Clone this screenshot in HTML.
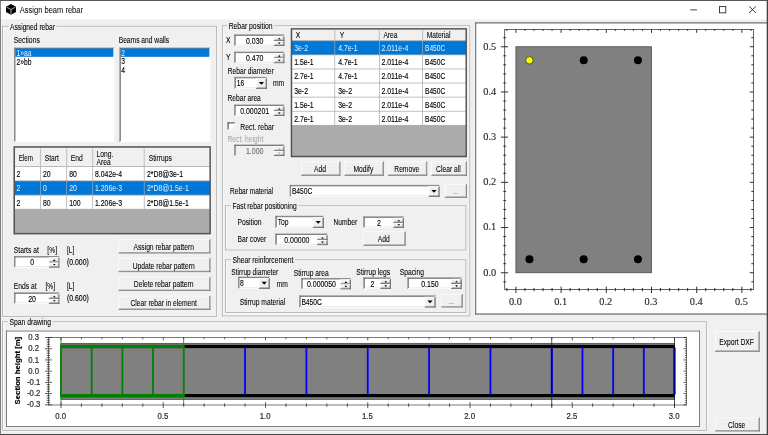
<!DOCTYPE html>
<html><head><meta charset="utf-8"><title>Assign beam rebar</title>
<style>html,body{margin:0;padding:0;background:#f0f0f0;overflow:hidden}body{width:768px;height:435px;font-family:"Liberation Sans",sans-serif}svg text{font-family:"Liberation Sans",sans-serif;white-space:pre}</style></head>
<body>
<svg width="768" height="435" viewBox="0 0 768 435" font-family="Liberation Sans, sans-serif" style="display:block">
<defs><filter id="b" x="-2%" y="-2%" width="104%" height="104%" color-interpolation-filters="sRGB"><feGaussianBlur stdDeviation="0.4"/></filter></defs>
<rect x="-5" y="-5" width="778" height="445" fill="#f0f0f0"/>
<g filter="url(#b)">
<rect x="-5" y="-5" width="778" height="445" fill="#f0f0f0"/>
<rect x="-5" y="-5" width="778" height="24.3" fill="#ffffff"/>
<g id="titlebar">
<path d="M11 4.1L16 6.8V12L11 14.7L6 12V6.8Z" fill="#000"/>
<path d="M11 9.5V14.2M11 9.5L6.6 7.2M11 9.5L15.4 7.2" stroke="#c4c4c4" stroke-width="0.85" fill="none"/>
<text x="19.8" y="13" font-size="8.9" fill="#111" textLength="63.2" lengthAdjust="spacingAndGlyphs" stroke="#111" stroke-width="0.06">Assign beam rebar</text>
<rect x="690.2" y="9.45" width="6.8" height="0.85" fill="#2c2c2c"/>
<rect x="719.5" y="6.6" width="6.3" height="6.2" fill="none" stroke="#2c2c2c" stroke-width="0.9"/>
<path d="M749.2 6.3L755.9 13M755.9 6.3L749.2 13" stroke="#222" stroke-width="0.9" fill="none"/>
</g>
<g id="assigned">
<rect x="3.28" y="26.88" width="214.1" height="290.2" fill="none" stroke="#ffffff" stroke-width="0.68"/>
<rect x="2.6" y="26.2" width="214.1" height="290.2" fill="none" stroke="#a0a0a0" stroke-width="0.68"/>
<rect x="8.5" y="22.2" width="48" height="8" fill="#f0f0f0"/>
<text x="10" y="29.68" font-size="8.32" fill="#000" textLength="45" lengthAdjust="spacingAndGlyphs" stroke="#000" stroke-width="0.07">Assigned rebar</text>
<text x="13.8" y="43.18" font-size="8.32" fill="#000" textLength="26" lengthAdjust="spacingAndGlyphs" stroke="#000" stroke-width="0.07">Sections</text>
<text x="118.7" y="43.18" font-size="8.32" fill="#000" textLength="50.5" lengthAdjust="spacingAndGlyphs" stroke="#000" stroke-width="0.07">Beams and walls</text>
<rect x="14" y="47.6" width="100.2" height="94.4" fill="#ffffff"/>
<rect x="14" y="47.6" width="100.2" height="0.68" fill="#808080"/>
<rect x="14" y="47.6" width="0.68" height="94.4" fill="#808080"/>
<rect x="14.68" y="48.28" width="98.84" height="0.68" fill="#585858"/>
<rect x="14.68" y="48.28" width="0.68" height="93.04" fill="#585858"/>
<rect x="14.68" y="141.32" width="99.52" height="0.68" fill="#ffffff"/>
<rect x="113.52" y="48.28" width="0.68" height="93.72" fill="#ffffff"/>
<rect x="15.36" y="140.64" width="98.16" height="0.68" fill="#ffffff"/>
<rect x="112.84" y="48.96" width="0.68" height="92.36" fill="#ffffff"/>
<rect x="15.3" y="48.5" width="98.1" height="8.3" fill="#0078d7"/>
<text x="16.6" y="56.18" font-size="9.52" fill="#fff" textLength="14.95" lengthAdjust="spacingAndGlyphs" fill-opacity="0.9">1»aa</text>
<text x="16.6" y="64.88" font-size="9.52" fill="#000" textLength="14.95" lengthAdjust="spacingAndGlyphs" stroke="#000" stroke-width="0.14">2»bb</text>
<rect x="119.4" y="47.6" width="90.8" height="94.4" fill="#ffffff"/>
<rect x="119.4" y="47.6" width="90.8" height="0.68" fill="#808080"/>
<rect x="119.4" y="47.6" width="0.68" height="94.4" fill="#808080"/>
<rect x="120.08" y="48.28" width="89.44" height="0.68" fill="#585858"/>
<rect x="120.08" y="48.28" width="0.68" height="93.04" fill="#585858"/>
<rect x="120.08" y="141.32" width="90.12" height="0.68" fill="#ffffff"/>
<rect x="209.52" y="48.28" width="0.68" height="93.72" fill="#ffffff"/>
<rect x="120.76" y="140.64" width="88.76" height="0.68" fill="#ffffff"/>
<rect x="208.84" y="48.96" width="0.68" height="92.36" fill="#ffffff"/>
<rect x="120.7" y="48.5" width="88.7" height="8.3" fill="#0078d7"/>
<text x="121.3" y="56.18" font-size="9.52" fill="#fff" textLength="3.74" lengthAdjust="spacingAndGlyphs" fill-opacity="0.9">2</text>
<text x="121.3" y="64.38" font-size="9.52" fill="#000" textLength="3.74" lengthAdjust="spacingAndGlyphs" stroke="#000" stroke-width="0.14">3</text>
<text x="121.3" y="72.88" font-size="9.52" fill="#000" textLength="3.74" lengthAdjust="spacingAndGlyphs" stroke="#000" stroke-width="0.14">4</text>
<rect x="13.6" y="146.3" width="197.2" height="88" fill="#ababab"/>
<rect x="14.4" y="147.1" width="195.6" height="19.5" fill="#f0f0f0"/>
<rect x="14.4" y="166.6" width="195.6" height="42.6" fill="#ffffff"/>
<rect x="14.4" y="180.9" width="195.6" height="14.2" fill="#0078d7"/>
<rect x="39.9" y="148.5" width="1" height="17.5" fill="#bdbdbd"/>
<rect x="40.05" y="166.6" width="0.7" height="42.6" fill="#a6a6a6"/>
<rect x="66.2" y="148.5" width="1" height="17.5" fill="#bdbdbd"/>
<rect x="66.35" y="166.6" width="0.7" height="42.6" fill="#a6a6a6"/>
<rect x="92.2" y="148.5" width="1" height="17.5" fill="#bdbdbd"/>
<rect x="92.35" y="166.6" width="0.7" height="42.6" fill="#a6a6a6"/>
<rect x="143.7" y="148.5" width="1" height="17.5" fill="#bdbdbd"/>
<rect x="143.85" y="166.6" width="0.7" height="42.6" fill="#a6a6a6"/>
<rect x="14.4" y="166.25" width="195.6" height="0.7" fill="#a6a6a6"/>
<rect x="14.4" y="180.55" width="195.6" height="0.7" fill="#a6a6a6"/>
<rect x="14.4" y="194.75" width="195.6" height="0.7" fill="#a6a6a6"/>
<rect x="14.4" y="208.85" width="195.6" height="0.7" fill="#a6a6a6"/>
<rect x="14.3" y="147" width="195.8" height="86.6" fill="none" stroke="#525252" stroke-width="1.4"/>
<text x="18.7" y="161.18" font-size="8.32" fill="#000" textLength="14.2" lengthAdjust="spacingAndGlyphs" stroke="#000" stroke-width="0.07">Elem</text>
<text x="44.7" y="161.18" font-size="8.32" fill="#000" textLength="14.19" lengthAdjust="spacingAndGlyphs" stroke="#000" stroke-width="0.07">Start</text>
<text x="70.8" y="161.18" font-size="8.32" fill="#000" textLength="11.96" lengthAdjust="spacingAndGlyphs" stroke="#000" stroke-width="0.07">End</text>
<text x="96.6" y="156.98" font-size="8.32" fill="#000" textLength="16.81" lengthAdjust="spacingAndGlyphs" stroke="#000" stroke-width="0.07">Long.</text>
<text x="96.6" y="164.98" font-size="8.32" fill="#000" textLength="14.19" lengthAdjust="spacingAndGlyphs" stroke="#000" stroke-width="0.07">Area</text>
<text x="148.7" y="161.08" font-size="8.32" fill="#000" textLength="23.15" lengthAdjust="spacingAndGlyphs" stroke="#000" stroke-width="0.07">Stirrups</text>
<text x="16.6" y="177.23" font-size="9.52" fill="#000" textLength="3.83" lengthAdjust="spacingAndGlyphs" stroke="#000" stroke-width="0.14">2</text>
<text x="43" y="177.23" font-size="9.52" fill="#000" textLength="7.65" lengthAdjust="spacingAndGlyphs" stroke="#000" stroke-width="0.14">20</text>
<text x="69.2" y="177.23" font-size="9.52" fill="#000" textLength="7.65" lengthAdjust="spacingAndGlyphs" stroke="#000" stroke-width="0.14">80</text>
<text x="95" y="177.23" font-size="9.52" fill="#000" textLength="27.16" lengthAdjust="spacingAndGlyphs" stroke="#000" stroke-width="0.14">8.042e-4</text>
<text x="147" y="177.23" font-size="9.52" fill="#000" textLength="36.05" lengthAdjust="spacingAndGlyphs" stroke="#000" stroke-width="0.14">2*D8@3e-1</text>
<text x="16.6" y="191.48" font-size="9.52" fill="#fff" textLength="3.83" lengthAdjust="spacingAndGlyphs" fill-opacity="0.9">2</text>
<text x="43" y="191.48" font-size="9.52" fill="#fff" textLength="3.83" lengthAdjust="spacingAndGlyphs" fill-opacity="0.9">0</text>
<text x="69.2" y="191.48" font-size="9.52" fill="#fff" textLength="7.65" lengthAdjust="spacingAndGlyphs" fill-opacity="0.9">20</text>
<text x="95" y="191.48" font-size="9.52" fill="#fff" textLength="27.16" lengthAdjust="spacingAndGlyphs" fill-opacity="0.9">1.206e-3</text>
<text x="147" y="191.48" font-size="9.52" fill="#fff" textLength="41.79" lengthAdjust="spacingAndGlyphs" fill-opacity="0.9">2*D8@1.5e-1</text>
<text x="16.6" y="205.63" font-size="9.52" fill="#000" textLength="3.83" lengthAdjust="spacingAndGlyphs" stroke="#000" stroke-width="0.14">2</text>
<text x="43" y="205.63" font-size="9.52" fill="#000" textLength="7.65" lengthAdjust="spacingAndGlyphs" stroke="#000" stroke-width="0.14">80</text>
<text x="69.2" y="205.63" font-size="9.52" fill="#000" textLength="11.48" lengthAdjust="spacingAndGlyphs" stroke="#000" stroke-width="0.14">100</text>
<text x="95" y="205.63" font-size="9.52" fill="#000" textLength="27.16" lengthAdjust="spacingAndGlyphs" stroke="#000" stroke-width="0.14">1.206e-3</text>
<text x="147" y="205.63" font-size="9.52" fill="#000" textLength="41.79" lengthAdjust="spacingAndGlyphs" stroke="#000" stroke-width="0.14">2*D8@1.5e-1</text>
<text x="13.8" y="253.18" font-size="8.32" fill="#000" textLength="25.02" lengthAdjust="spacingAndGlyphs" stroke="#000" stroke-width="0.07">Starts at</text>
<text x="47.3" y="253.18" font-size="8.32" fill="#000" textLength="9.71" lengthAdjust="spacingAndGlyphs" stroke="#000" stroke-width="0.07">[%]</text>
<text x="67" y="253.18" font-size="8.32" fill="#000" textLength="7.47" lengthAdjust="spacingAndGlyphs" stroke="#000" stroke-width="0.07">[L]</text>
<rect x="14" y="256" width="45.4" height="11.6" fill="#ffffff"/>
<rect x="14" y="256" width="45.4" height="0.68" fill="#808080"/>
<rect x="14" y="256" width="0.68" height="11.6" fill="#808080"/>
<rect x="14.68" y="256.68" width="44.04" height="0.68" fill="#585858"/>
<rect x="14.68" y="256.68" width="0.68" height="10.24" fill="#585858"/>
<rect x="14.68" y="266.92" width="44.72" height="0.68" fill="#ffffff"/>
<rect x="58.72" y="256.68" width="0.68" height="10.92" fill="#ffffff"/>
<rect x="15.36" y="266.24" width="43.36" height="0.68" fill="#e3e3e3"/>
<rect x="58.04" y="257.36" width="0.68" height="9.56" fill="#e3e3e3"/>
<rect x="48.8" y="257.5" width="10.6" height="5.15" fill="#f0f0f0"/>
<rect x="48.8" y="257.5" width="9.82" height="0.78" fill="#ffffff"/>
<rect x="48.8" y="257.5" width="0.78" height="4.37" fill="#ffffff"/>
<rect x="49.58" y="261.09" width="9.04" height="0.78" fill="#a0a0a0"/>
<rect x="57.84" y="258.28" width="0.78" height="3.59" fill="#a0a0a0"/>
<rect x="48.8" y="261.87" width="10.6" height="0.78" fill="#5e5e5e"/>
<rect x="58.62" y="257.5" width="0.78" height="5.15" fill="#5e5e5e"/>
<rect x="48.8" y="262.65" width="10.6" height="4.95" fill="#f0f0f0"/>
<rect x="48.8" y="262.65" width="9.82" height="0.78" fill="#ffffff"/>
<rect x="48.8" y="262.65" width="0.78" height="4.17" fill="#ffffff"/>
<rect x="49.58" y="266.04" width="9.04" height="0.78" fill="#a0a0a0"/>
<rect x="57.84" y="263.43" width="0.78" height="3.39" fill="#a0a0a0"/>
<rect x="48.8" y="266.82" width="10.6" height="0.78" fill="#5e5e5e"/>
<rect x="58.62" y="262.65" width="0.78" height="4.95" fill="#5e5e5e"/>
<path d="M52.95 260.97H55.65L54.3 259.37Z" fill="#000"/>
<path d="M52.95 264.02H55.65L54.3 265.62Z" fill="#000"/>
<text x="32.08" y="265.28" font-size="9.52" fill="#000" textLength="3.87" lengthAdjust="spacingAndGlyphs" text-anchor="middle" stroke="#000" stroke-width="0.14">0</text>
<text x="67" y="265.18" font-size="9.52" fill="#000" textLength="21.8" lengthAdjust="spacingAndGlyphs" stroke="#000" stroke-width="0.14">(0.000)</text>
<text x="13.8" y="289.18" font-size="8.32" fill="#000" textLength="22.79" lengthAdjust="spacingAndGlyphs" stroke="#000" stroke-width="0.07">Ends at</text>
<text x="45.5" y="289.18" font-size="8.32" fill="#000" textLength="9.71" lengthAdjust="spacingAndGlyphs" stroke="#000" stroke-width="0.07">[%]</text>
<text x="67" y="289.18" font-size="8.32" fill="#000" textLength="7.47" lengthAdjust="spacingAndGlyphs" stroke="#000" stroke-width="0.07">[L]</text>
<rect x="14" y="292.4" width="45.4" height="11.4" fill="#ffffff"/>
<rect x="14" y="292.4" width="45.4" height="0.68" fill="#808080"/>
<rect x="14" y="292.4" width="0.68" height="11.4" fill="#808080"/>
<rect x="14.68" y="293.08" width="44.04" height="0.68" fill="#585858"/>
<rect x="14.68" y="293.08" width="0.68" height="10.04" fill="#585858"/>
<rect x="14.68" y="303.12" width="44.72" height="0.68" fill="#ffffff"/>
<rect x="58.72" y="293.08" width="0.68" height="10.72" fill="#ffffff"/>
<rect x="15.36" y="302.44" width="43.36" height="0.68" fill="#e3e3e3"/>
<rect x="58.04" y="293.76" width="0.68" height="9.36" fill="#e3e3e3"/>
<rect x="48.8" y="293.9" width="10.6" height="5.05" fill="#f0f0f0"/>
<rect x="48.8" y="293.9" width="9.82" height="0.78" fill="#ffffff"/>
<rect x="48.8" y="293.9" width="0.78" height="4.27" fill="#ffffff"/>
<rect x="49.58" y="297.39" width="9.04" height="0.78" fill="#a0a0a0"/>
<rect x="57.84" y="294.68" width="0.78" height="3.49" fill="#a0a0a0"/>
<rect x="48.8" y="298.17" width="10.6" height="0.78" fill="#5e5e5e"/>
<rect x="58.62" y="293.9" width="0.78" height="5.05" fill="#5e5e5e"/>
<rect x="48.8" y="298.95" width="10.6" height="4.85" fill="#f0f0f0"/>
<rect x="48.8" y="298.95" width="9.82" height="0.78" fill="#ffffff"/>
<rect x="48.8" y="298.95" width="0.78" height="4.07" fill="#ffffff"/>
<rect x="49.58" y="302.24" width="9.04" height="0.78" fill="#a0a0a0"/>
<rect x="57.84" y="299.73" width="0.78" height="3.29" fill="#a0a0a0"/>
<rect x="48.8" y="303.02" width="10.6" height="0.78" fill="#5e5e5e"/>
<rect x="58.62" y="298.95" width="0.78" height="4.85" fill="#5e5e5e"/>
<path d="M52.95 297.32H55.65L54.3 295.72Z" fill="#000"/>
<path d="M52.95 300.27H55.65L54.3 301.87Z" fill="#000"/>
<text x="32.08" y="301.58" font-size="9.52" fill="#000" textLength="7.74" lengthAdjust="spacingAndGlyphs" text-anchor="middle" stroke="#000" stroke-width="0.14">20</text>
<text x="67" y="301.18" font-size="9.52" fill="#000" textLength="21.8" lengthAdjust="spacingAndGlyphs" stroke="#000" stroke-width="0.14">(0.600)</text>
<rect x="118.4" y="239.2" width="92" height="14.2" fill="#f0f0f0"/>
<rect x="118.4" y="239.2" width="91.32" height="0.68" fill="#ffffff"/>
<rect x="118.4" y="239.2" width="0.68" height="13.52" fill="#ffffff"/>
<rect x="119.08" y="252.04" width="90.64" height="0.68" fill="#a0a0a0"/>
<rect x="209.04" y="239.88" width="0.68" height="12.84" fill="#a0a0a0"/>
<rect x="118.4" y="252.72" width="92" height="0.68" fill="#696969"/>
<rect x="209.72" y="239.2" width="0.68" height="14.2" fill="#696969"/>
<text x="163.7" y="249.88" font-size="8.32" fill="#000" textLength="60.51" lengthAdjust="spacingAndGlyphs" text-anchor="middle" stroke="#000" stroke-width="0.07">Assign rebar pattern</text>
<rect x="118.4" y="258" width="92" height="14.1" fill="#f0f0f0"/>
<rect x="118.4" y="258" width="91.32" height="0.68" fill="#ffffff"/>
<rect x="118.4" y="258" width="0.68" height="13.42" fill="#ffffff"/>
<rect x="119.08" y="270.74" width="90.64" height="0.68" fill="#a0a0a0"/>
<rect x="209.04" y="258.68" width="0.68" height="12.74" fill="#a0a0a0"/>
<rect x="118.4" y="271.42" width="92" height="0.68" fill="#696969"/>
<rect x="209.72" y="258" width="0.68" height="14.1" fill="#696969"/>
<text x="163.7" y="268.63" font-size="8.32" fill="#000" textLength="62.01" lengthAdjust="spacingAndGlyphs" text-anchor="middle" stroke="#000" stroke-width="0.07">Update rebar pattern</text>
<rect x="118.4" y="276.8" width="92" height="14.1" fill="#f0f0f0"/>
<rect x="118.4" y="276.8" width="91.32" height="0.68" fill="#ffffff"/>
<rect x="118.4" y="276.8" width="0.68" height="13.42" fill="#ffffff"/>
<rect x="119.08" y="289.54" width="90.64" height="0.68" fill="#a0a0a0"/>
<rect x="209.04" y="277.48" width="0.68" height="12.74" fill="#a0a0a0"/>
<rect x="118.4" y="290.22" width="92" height="0.68" fill="#696969"/>
<rect x="209.72" y="276.8" width="0.68" height="14.1" fill="#696969"/>
<text x="163.7" y="287.43" font-size="8.32" fill="#000" textLength="59.76" lengthAdjust="spacingAndGlyphs" text-anchor="middle" stroke="#000" stroke-width="0.07">Delete rebar pattern</text>
<rect x="118.4" y="295.7" width="92" height="14.1" fill="#f0f0f0"/>
<rect x="118.4" y="295.7" width="91.32" height="0.68" fill="#ffffff"/>
<rect x="118.4" y="295.7" width="0.68" height="13.42" fill="#ffffff"/>
<rect x="119.08" y="308.44" width="90.64" height="0.68" fill="#a0a0a0"/>
<rect x="209.04" y="296.38" width="0.68" height="12.74" fill="#a0a0a0"/>
<rect x="118.4" y="309.12" width="92" height="0.68" fill="#696969"/>
<rect x="209.72" y="295.7" width="0.68" height="14.1" fill="#696969"/>
<text x="163.7" y="306.33" font-size="8.32" fill="#000" textLength="66.48" lengthAdjust="spacingAndGlyphs" text-anchor="middle" stroke="#000" stroke-width="0.07">Clear rebar in element</text>
</g>
<g id="rebarpos">
<rect x="222.98" y="26.48" width="247.6" height="290.2" fill="none" stroke="#ffffff" stroke-width="0.68"/>
<rect x="222.3" y="25.8" width="247.6" height="290.2" fill="none" stroke="#a0a0a0" stroke-width="0.68"/>
<rect x="227.2" y="21.8" width="46.8" height="8" fill="#f0f0f0"/>
<text x="228.7" y="29.28" font-size="8.32" fill="#000" textLength="43.8" lengthAdjust="spacingAndGlyphs" stroke="#000" stroke-width="0.07">Rebar position</text>
<text x="226" y="42.98" font-size="8.32" fill="#000" textLength="4.48" lengthAdjust="spacingAndGlyphs" stroke="#000" stroke-width="0.07">X</text>
<rect x="234.2" y="34.4" width="50.2" height="11.6" fill="#ffffff"/>
<rect x="234.2" y="34.4" width="50.2" height="0.68" fill="#808080"/>
<rect x="234.2" y="34.4" width="0.68" height="11.6" fill="#808080"/>
<rect x="234.88" y="35.08" width="48.84" height="0.68" fill="#585858"/>
<rect x="234.88" y="35.08" width="0.68" height="10.24" fill="#585858"/>
<rect x="234.88" y="45.32" width="49.52" height="0.68" fill="#ffffff"/>
<rect x="283.72" y="35.08" width="0.68" height="10.92" fill="#ffffff"/>
<rect x="235.56" y="44.64" width="48.16" height="0.68" fill="#e3e3e3"/>
<rect x="283.04" y="35.76" width="0.68" height="9.56" fill="#e3e3e3"/>
<rect x="273.8" y="35.9" width="10.6" height="5.15" fill="#f0f0f0"/>
<rect x="273.8" y="35.9" width="9.82" height="0.78" fill="#ffffff"/>
<rect x="273.8" y="35.9" width="0.78" height="4.37" fill="#ffffff"/>
<rect x="274.58" y="39.49" width="9.04" height="0.78" fill="#a0a0a0"/>
<rect x="282.84" y="36.68" width="0.78" height="3.59" fill="#a0a0a0"/>
<rect x="273.8" y="40.27" width="10.6" height="0.78" fill="#5e5e5e"/>
<rect x="283.62" y="35.9" width="0.78" height="5.15" fill="#5e5e5e"/>
<rect x="273.8" y="41.05" width="10.6" height="4.95" fill="#f0f0f0"/>
<rect x="273.8" y="41.05" width="9.82" height="0.78" fill="#ffffff"/>
<rect x="273.8" y="41.05" width="0.78" height="4.17" fill="#ffffff"/>
<rect x="274.58" y="44.44" width="9.04" height="0.78" fill="#a0a0a0"/>
<rect x="282.84" y="41.83" width="0.78" height="3.39" fill="#a0a0a0"/>
<rect x="273.8" y="45.22" width="10.6" height="0.78" fill="#5e5e5e"/>
<rect x="283.62" y="41.05" width="0.78" height="4.95" fill="#5e5e5e"/>
<path d="M277.95 39.37H280.65L279.3 37.77Z" fill="#000"/>
<path d="M277.95 42.42H280.65L279.3 44.02Z" fill="#000"/>
<text x="254.68" y="43.68" font-size="9.52" fill="#000" textLength="17.42" lengthAdjust="spacingAndGlyphs" text-anchor="middle" stroke="#000" stroke-width="0.14">0.030</text>
<text x="226" y="60.08" font-size="8.32" fill="#000" textLength="4.48" lengthAdjust="spacingAndGlyphs" stroke="#000" stroke-width="0.07">Y</text>
<rect x="234.2" y="51.7" width="50.2" height="11.5" fill="#ffffff"/>
<rect x="234.2" y="51.7" width="50.2" height="0.68" fill="#808080"/>
<rect x="234.2" y="51.7" width="0.68" height="11.5" fill="#808080"/>
<rect x="234.88" y="52.38" width="48.84" height="0.68" fill="#585858"/>
<rect x="234.88" y="52.38" width="0.68" height="10.14" fill="#585858"/>
<rect x="234.88" y="62.52" width="49.52" height="0.68" fill="#ffffff"/>
<rect x="283.72" y="52.38" width="0.68" height="10.82" fill="#ffffff"/>
<rect x="235.56" y="61.84" width="48.16" height="0.68" fill="#e3e3e3"/>
<rect x="283.04" y="53.06" width="0.68" height="9.46" fill="#e3e3e3"/>
<rect x="273.8" y="53.2" width="10.6" height="5.1" fill="#f0f0f0"/>
<rect x="273.8" y="53.2" width="9.82" height="0.78" fill="#ffffff"/>
<rect x="273.8" y="53.2" width="0.78" height="4.32" fill="#ffffff"/>
<rect x="274.58" y="56.74" width="9.04" height="0.78" fill="#a0a0a0"/>
<rect x="282.84" y="53.98" width="0.78" height="3.54" fill="#a0a0a0"/>
<rect x="273.8" y="57.52" width="10.6" height="0.78" fill="#5e5e5e"/>
<rect x="283.62" y="53.2" width="0.78" height="5.1" fill="#5e5e5e"/>
<rect x="273.8" y="58.3" width="10.6" height="4.9" fill="#f0f0f0"/>
<rect x="273.8" y="58.3" width="9.82" height="0.78" fill="#ffffff"/>
<rect x="273.8" y="58.3" width="0.78" height="4.12" fill="#ffffff"/>
<rect x="274.58" y="61.64" width="9.04" height="0.78" fill="#a0a0a0"/>
<rect x="282.84" y="59.08" width="0.78" height="3.34" fill="#a0a0a0"/>
<rect x="273.8" y="62.42" width="10.6" height="0.78" fill="#5e5e5e"/>
<rect x="283.62" y="58.3" width="0.78" height="4.9" fill="#5e5e5e"/>
<path d="M277.95 56.65H280.65L279.3 55.05Z" fill="#000"/>
<path d="M277.95 59.65H280.65L279.3 61.25Z" fill="#000"/>
<text x="254.68" y="60.93" font-size="9.52" fill="#000" textLength="17.42" lengthAdjust="spacingAndGlyphs" text-anchor="middle" stroke="#000" stroke-width="0.14">0.470</text>
<text x="227.7" y="73.58" font-size="8.32" fill="#000" textLength="46" lengthAdjust="spacingAndGlyphs" stroke="#000" stroke-width="0.07">Rebar diameter</text>
<rect x="234.4" y="76.9" width="32.6" height="11.9" fill="#ffffff"/>
<rect x="234.4" y="76.9" width="32.6" height="0.68" fill="#808080"/>
<rect x="234.4" y="76.9" width="0.68" height="11.9" fill="#808080"/>
<rect x="235.08" y="77.58" width="31.24" height="0.68" fill="#585858"/>
<rect x="235.08" y="77.58" width="0.68" height="10.54" fill="#585858"/>
<rect x="235.08" y="88.12" width="31.92" height="0.68" fill="#ffffff"/>
<rect x="266.32" y="77.58" width="0.68" height="11.22" fill="#ffffff"/>
<rect x="235.76" y="87.44" width="30.56" height="0.68" fill="#e3e3e3"/>
<rect x="265.64" y="78.26" width="0.68" height="9.86" fill="#e3e3e3"/>
<rect x="256" y="78.4" width="11" height="10.4" fill="#f0f0f0"/>
<rect x="256" y="78.4" width="10.22" height="0.78" fill="#ffffff"/>
<rect x="256" y="78.4" width="0.78" height="9.62" fill="#ffffff"/>
<rect x="256.78" y="87.24" width="9.44" height="0.78" fill="#a0a0a0"/>
<rect x="265.44" y="79.18" width="0.78" height="8.84" fill="#a0a0a0"/>
<rect x="256" y="88.02" width="11" height="0.78" fill="#5e5e5e"/>
<rect x="266.22" y="78.4" width="0.78" height="10.4" fill="#5e5e5e"/>
<path d="M258.8 81.95H264L261.4 84.75Z" fill="#000"/>
<text x="236.8" y="86.33" font-size="9.52" fill="#000" textLength="7.47" lengthAdjust="spacingAndGlyphs" stroke="#000" stroke-width="0.14">16</text>
<text x="273" y="86.38" font-size="8.32" fill="#000" textLength="11.2" lengthAdjust="spacingAndGlyphs" stroke="#000" stroke-width="0.07">mm</text>
<text x="227.5" y="101.48" font-size="8.32" fill="#000" textLength="33.3" lengthAdjust="spacingAndGlyphs" stroke="#000" stroke-width="0.07">Rebar area</text>
<rect x="234.2" y="104.6" width="50.2" height="11.4" fill="#ffffff"/>
<rect x="234.2" y="104.6" width="50.2" height="0.68" fill="#808080"/>
<rect x="234.2" y="104.6" width="0.68" height="11.4" fill="#808080"/>
<rect x="234.88" y="105.28" width="48.84" height="0.68" fill="#585858"/>
<rect x="234.88" y="105.28" width="0.68" height="10.04" fill="#585858"/>
<rect x="234.88" y="115.32" width="49.52" height="0.68" fill="#ffffff"/>
<rect x="283.72" y="105.28" width="0.68" height="10.72" fill="#ffffff"/>
<rect x="235.56" y="114.64" width="48.16" height="0.68" fill="#e3e3e3"/>
<rect x="283.04" y="105.96" width="0.68" height="9.36" fill="#e3e3e3"/>
<rect x="273.8" y="106.1" width="10.6" height="5.05" fill="#f0f0f0"/>
<rect x="273.8" y="106.1" width="9.82" height="0.78" fill="#ffffff"/>
<rect x="273.8" y="106.1" width="0.78" height="4.27" fill="#ffffff"/>
<rect x="274.58" y="109.59" width="9.04" height="0.78" fill="#a0a0a0"/>
<rect x="282.84" y="106.88" width="0.78" height="3.49" fill="#a0a0a0"/>
<rect x="273.8" y="110.37" width="10.6" height="0.78" fill="#5e5e5e"/>
<rect x="283.62" y="106.1" width="0.78" height="5.05" fill="#5e5e5e"/>
<rect x="273.8" y="111.15" width="10.6" height="4.85" fill="#f0f0f0"/>
<rect x="273.8" y="111.15" width="9.82" height="0.78" fill="#ffffff"/>
<rect x="273.8" y="111.15" width="0.78" height="4.07" fill="#ffffff"/>
<rect x="274.58" y="114.44" width="9.04" height="0.78" fill="#a0a0a0"/>
<rect x="282.84" y="111.93" width="0.78" height="3.29" fill="#a0a0a0"/>
<rect x="273.8" y="115.22" width="10.6" height="0.78" fill="#5e5e5e"/>
<rect x="283.62" y="111.15" width="0.78" height="4.85" fill="#5e5e5e"/>
<path d="M277.95 109.52H280.65L279.3 107.92Z" fill="#000"/>
<path d="M277.95 112.47H280.65L279.3 114.07Z" fill="#000"/>
<text x="254.68" y="113.78" font-size="9.52" fill="#000" textLength="29.03" lengthAdjust="spacingAndGlyphs" text-anchor="middle" stroke="#000" stroke-width="0.14">0.000201</text>
<rect x="227.4" y="122.1" width="7.9" height="7.9" fill="#ffffff"/>
<rect x="227.4" y="122.1" width="7.9" height="0.68" fill="#707070"/>
<rect x="227.4" y="122.1" width="0.68" height="7.9" fill="#707070"/>
<rect x="228.08" y="122.78" width="6.54" height="0.68" fill="#505050"/>
<rect x="228.08" y="122.78" width="0.68" height="6.54" fill="#505050"/>
<rect x="228.08" y="129.32" width="7.22" height="0.68" fill="#ffffff"/>
<rect x="234.62" y="122.78" width="0.68" height="7.22" fill="#ffffff"/>
<rect x="228.76" y="128.64" width="5.86" height="0.68" fill="#e3e3e3"/>
<rect x="233.94" y="123.46" width="0.68" height="5.86" fill="#e3e3e3"/>
<text x="240.3" y="129.88" font-size="8.32" fill="#000" textLength="33.7" lengthAdjust="spacingAndGlyphs" stroke="#000" stroke-width="0.07">Rect. rebar</text>
<text x="227.5" y="141.58" font-size="8.32" fill="#a9a9a9" textLength="35.86" lengthAdjust="spacingAndGlyphs" stroke="#a9a9a9" stroke-width="0.07">Rect. height</text>
<rect x="234.2" y="144.6" width="50.2" height="11.4" fill="#f0f0f0"/>
<rect x="234.2" y="144.6" width="50.2" height="0.68" fill="#808080"/>
<rect x="234.2" y="144.6" width="0.68" height="11.4" fill="#808080"/>
<rect x="234.88" y="145.28" width="48.84" height="0.68" fill="#585858"/>
<rect x="234.88" y="145.28" width="0.68" height="10.04" fill="#585858"/>
<rect x="234.88" y="155.32" width="49.52" height="0.68" fill="#ffffff"/>
<rect x="283.72" y="145.28" width="0.68" height="10.72" fill="#ffffff"/>
<rect x="235.56" y="154.64" width="48.16" height="0.68" fill="#e3e3e3"/>
<rect x="283.04" y="145.96" width="0.68" height="9.36" fill="#e3e3e3"/>
<rect x="273.8" y="146.1" width="10.6" height="5.05" fill="#f0f0f0"/>
<rect x="273.8" y="146.1" width="9.82" height="0.78" fill="#ffffff"/>
<rect x="273.8" y="146.1" width="0.78" height="4.27" fill="#ffffff"/>
<rect x="274.58" y="149.59" width="9.04" height="0.78" fill="#a0a0a0"/>
<rect x="282.84" y="146.88" width="0.78" height="3.49" fill="#a0a0a0"/>
<rect x="273.8" y="150.37" width="10.6" height="0.78" fill="#5e5e5e"/>
<rect x="283.62" y="146.1" width="0.78" height="5.05" fill="#5e5e5e"/>
<rect x="273.8" y="151.15" width="10.6" height="4.85" fill="#f0f0f0"/>
<rect x="273.8" y="151.15" width="9.82" height="0.78" fill="#ffffff"/>
<rect x="273.8" y="151.15" width="0.78" height="4.07" fill="#ffffff"/>
<rect x="274.58" y="154.44" width="9.04" height="0.78" fill="#a0a0a0"/>
<rect x="282.84" y="151.93" width="0.78" height="3.29" fill="#a0a0a0"/>
<rect x="273.8" y="155.22" width="10.6" height="0.78" fill="#5e5e5e"/>
<rect x="283.62" y="151.15" width="0.78" height="4.85" fill="#5e5e5e"/>
<path d="M277.95 149.52H280.65L279.3 147.92Z" fill="#a8a8a8"/>
<path d="M277.95 152.47H280.65L279.3 154.07Z" fill="#a8a8a8"/>
<text x="254.68" y="153.78" font-size="9.52" fill="#6d6d6d" textLength="17.42" lengthAdjust="spacingAndGlyphs" text-anchor="middle" stroke="#6d6d6d" stroke-width="0.14">1.000</text>
<rect x="290.8" y="28.2" width="176.1" height="129" fill="#ababab"/>
<rect x="291.6" y="29" width="174.5" height="11.8" fill="#f0f0f0"/>
<rect x="291.6" y="40.8" width="174.5" height="84.48" fill="#ffffff"/>
<rect x="291.6" y="40.8" width="174.5" height="14.08" fill="#0078d7"/>
<rect x="334.3" y="30.4" width="1" height="9.8" fill="#bdbdbd"/>
<rect x="334.45" y="40.8" width="0.7" height="84.48" fill="#a6a6a6"/>
<rect x="378.9" y="30.4" width="1" height="9.8" fill="#bdbdbd"/>
<rect x="379.05" y="40.8" width="0.7" height="84.48" fill="#a6a6a6"/>
<rect x="422.1" y="30.4" width="1" height="9.8" fill="#bdbdbd"/>
<rect x="422.25" y="40.8" width="0.7" height="84.48" fill="#a6a6a6"/>
<rect x="291.6" y="40.45" width="174.5" height="0.7" fill="#a6a6a6"/>
<rect x="291.6" y="54.53" width="174.5" height="0.7" fill="#a6a6a6"/>
<rect x="291.6" y="68.61" width="174.5" height="0.7" fill="#a6a6a6"/>
<rect x="291.6" y="82.69" width="174.5" height="0.7" fill="#a6a6a6"/>
<rect x="291.6" y="96.77" width="174.5" height="0.7" fill="#a6a6a6"/>
<rect x="291.6" y="110.85" width="174.5" height="0.7" fill="#a6a6a6"/>
<rect x="291.6" y="124.93" width="174.5" height="0.7" fill="#a6a6a6"/>
<rect x="291.5" y="28.9" width="174.7" height="127.6" fill="none" stroke="#525252" stroke-width="1.4"/>
<text x="295.8" y="38.48" font-size="8.32" fill="#000" textLength="4.48" lengthAdjust="spacingAndGlyphs" stroke="#000" stroke-width="0.07">X</text>
<text x="339.8" y="38.48" font-size="8.32" fill="#000" textLength="4.48" lengthAdjust="spacingAndGlyphs" stroke="#000" stroke-width="0.07">Y</text>
<text x="383.4" y="38.48" font-size="8.32" fill="#000" textLength="14.19" lengthAdjust="spacingAndGlyphs" stroke="#000" stroke-width="0.07">Area</text>
<text x="426.7" y="38.48" font-size="8.32" fill="#000" textLength="23.9" lengthAdjust="spacingAndGlyphs" stroke="#000" stroke-width="0.07">Material</text>
<text x="294.2" y="51.32" font-size="9.52" fill="#fff" textLength="13.77" lengthAdjust="spacingAndGlyphs" fill-opacity="0.9">3e-2</text>
<text x="338.2" y="51.32" font-size="9.52" fill="#fff" textLength="19.51" lengthAdjust="spacingAndGlyphs" fill-opacity="0.9">4.7e-1</text>
<text x="381.4" y="51.32" font-size="9.52" fill="#fff" textLength="27" lengthAdjust="spacingAndGlyphs" fill-opacity="0.9">2.011e-4</text>
<text x="425" y="51.32" font-size="9.52" fill="#fff" textLength="20.3" lengthAdjust="spacingAndGlyphs" fill-opacity="0.9">B450C</text>
<text x="294.2" y="65.4" font-size="9.52" fill="#000" textLength="19.51" lengthAdjust="spacingAndGlyphs" stroke="#000" stroke-width="0.14">1.5e-1</text>
<text x="338.2" y="65.4" font-size="9.52" fill="#000" textLength="19.51" lengthAdjust="spacingAndGlyphs" stroke="#000" stroke-width="0.14">4.7e-1</text>
<text x="381.4" y="65.4" font-size="9.52" fill="#000" textLength="27" lengthAdjust="spacingAndGlyphs" stroke="#000" stroke-width="0.14">2.011e-4</text>
<text x="425" y="65.4" font-size="9.52" fill="#000" textLength="20.3" lengthAdjust="spacingAndGlyphs" stroke="#000" stroke-width="0.14">B450C</text>
<text x="294.2" y="79.48" font-size="9.52" fill="#000" textLength="19.51" lengthAdjust="spacingAndGlyphs" stroke="#000" stroke-width="0.14">2.7e-1</text>
<text x="338.2" y="79.48" font-size="9.52" fill="#000" textLength="19.51" lengthAdjust="spacingAndGlyphs" stroke="#000" stroke-width="0.14">4.7e-1</text>
<text x="381.4" y="79.48" font-size="9.52" fill="#000" textLength="27" lengthAdjust="spacingAndGlyphs" stroke="#000" stroke-width="0.14">2.011e-4</text>
<text x="425" y="79.48" font-size="9.52" fill="#000" textLength="20.3" lengthAdjust="spacingAndGlyphs" stroke="#000" stroke-width="0.14">B450C</text>
<text x="294.2" y="93.56" font-size="9.52" fill="#000" textLength="13.77" lengthAdjust="spacingAndGlyphs" stroke="#000" stroke-width="0.14">3e-2</text>
<text x="338.2" y="93.56" font-size="9.52" fill="#000" textLength="13.77" lengthAdjust="spacingAndGlyphs" stroke="#000" stroke-width="0.14">3e-2</text>
<text x="381.4" y="93.56" font-size="9.52" fill="#000" textLength="27" lengthAdjust="spacingAndGlyphs" stroke="#000" stroke-width="0.14">2.011e-4</text>
<text x="425" y="93.56" font-size="9.52" fill="#000" textLength="20.3" lengthAdjust="spacingAndGlyphs" stroke="#000" stroke-width="0.14">B450C</text>
<text x="294.2" y="107.64" font-size="9.52" fill="#000" textLength="19.51" lengthAdjust="spacingAndGlyphs" stroke="#000" stroke-width="0.14">1.5e-1</text>
<text x="338.2" y="107.64" font-size="9.52" fill="#000" textLength="13.77" lengthAdjust="spacingAndGlyphs" stroke="#000" stroke-width="0.14">3e-2</text>
<text x="381.4" y="107.64" font-size="9.52" fill="#000" textLength="27" lengthAdjust="spacingAndGlyphs" stroke="#000" stroke-width="0.14">2.011e-4</text>
<text x="425" y="107.64" font-size="9.52" fill="#000" textLength="20.3" lengthAdjust="spacingAndGlyphs" stroke="#000" stroke-width="0.14">B450C</text>
<text x="294.2" y="121.72" font-size="9.52" fill="#000" textLength="19.51" lengthAdjust="spacingAndGlyphs" stroke="#000" stroke-width="0.14">2.7e-1</text>
<text x="338.2" y="121.72" font-size="9.52" fill="#000" textLength="13.77" lengthAdjust="spacingAndGlyphs" stroke="#000" stroke-width="0.14">3e-2</text>
<text x="381.4" y="121.72" font-size="9.52" fill="#000" textLength="27" lengthAdjust="spacingAndGlyphs" stroke="#000" stroke-width="0.14">2.011e-4</text>
<text x="425" y="121.72" font-size="9.52" fill="#000" textLength="20.3" lengthAdjust="spacingAndGlyphs" stroke="#000" stroke-width="0.14">B450C</text>
<rect x="301" y="161.5" width="39.4" height="14.2" fill="#f0f0f0"/>
<rect x="301" y="161.5" width="38.72" height="0.68" fill="#ffffff"/>
<rect x="301" y="161.5" width="0.68" height="13.52" fill="#ffffff"/>
<rect x="301.68" y="174.34" width="38.04" height="0.68" fill="#a0a0a0"/>
<rect x="339.04" y="162.18" width="0.68" height="12.84" fill="#a0a0a0"/>
<rect x="301" y="175.02" width="39.4" height="0.68" fill="#696969"/>
<rect x="339.72" y="161.5" width="0.68" height="14.2" fill="#696969"/>
<text x="320" y="172.18" font-size="8.32" fill="#000" textLength="11.96" lengthAdjust="spacingAndGlyphs" text-anchor="middle" stroke="#000" stroke-width="0.07">Add</text>
<rect x="344.4" y="161.5" width="39.4" height="14.2" fill="#f0f0f0"/>
<rect x="344.4" y="161.5" width="38.72" height="0.68" fill="#ffffff"/>
<rect x="344.4" y="161.5" width="0.68" height="13.52" fill="#ffffff"/>
<rect x="345.08" y="174.34" width="38.04" height="0.68" fill="#a0a0a0"/>
<rect x="382.44" y="162.18" width="0.68" height="12.84" fill="#a0a0a0"/>
<rect x="344.4" y="175.02" width="39.4" height="0.68" fill="#696969"/>
<rect x="383.12" y="161.5" width="0.68" height="14.2" fill="#696969"/>
<text x="363.4" y="172.18" font-size="8.32" fill="#000" textLength="19.79" lengthAdjust="spacingAndGlyphs" text-anchor="middle" stroke="#000" stroke-width="0.07">Modify</text>
<rect x="387.8" y="161.5" width="39.4" height="14.2" fill="#f0f0f0"/>
<rect x="387.8" y="161.5" width="38.72" height="0.68" fill="#ffffff"/>
<rect x="387.8" y="161.5" width="0.68" height="13.52" fill="#ffffff"/>
<rect x="388.48" y="174.34" width="38.04" height="0.68" fill="#a0a0a0"/>
<rect x="425.84" y="162.18" width="0.68" height="12.84" fill="#a0a0a0"/>
<rect x="387.8" y="175.02" width="39.4" height="0.68" fill="#696969"/>
<rect x="426.52" y="161.5" width="0.68" height="14.2" fill="#696969"/>
<text x="406.8" y="172.18" font-size="8.32" fill="#000" textLength="25.02" lengthAdjust="spacingAndGlyphs" text-anchor="middle" stroke="#000" stroke-width="0.07">Remove</text>
<rect x="431.2" y="161.5" width="35.8" height="14.2" fill="#f0f0f0"/>
<rect x="431.2" y="161.5" width="35.12" height="0.68" fill="#ffffff"/>
<rect x="431.2" y="161.5" width="0.68" height="13.52" fill="#ffffff"/>
<rect x="431.88" y="174.34" width="34.44" height="0.68" fill="#a0a0a0"/>
<rect x="465.64" y="162.18" width="0.68" height="12.84" fill="#a0a0a0"/>
<rect x="431.2" y="175.02" width="35.8" height="0.68" fill="#696969"/>
<rect x="466.32" y="161.5" width="0.68" height="14.2" fill="#696969"/>
<text x="448.4" y="172.18" font-size="8.32" fill="#000" textLength="24.65" lengthAdjust="spacingAndGlyphs" text-anchor="middle" stroke="#000" stroke-width="0.07">Clear all</text>
<text x="230" y="193.98" font-size="8.32" fill="#000" textLength="43" lengthAdjust="spacingAndGlyphs" stroke="#000" stroke-width="0.07">Rebar material</text>
<rect x="289.7" y="184.9" width="149.9" height="11.9" fill="#ffffff"/>
<rect x="289.7" y="184.9" width="149.9" height="0.68" fill="#808080"/>
<rect x="289.7" y="184.9" width="0.68" height="11.9" fill="#808080"/>
<rect x="290.38" y="185.58" width="148.54" height="0.68" fill="#585858"/>
<rect x="290.38" y="185.58" width="0.68" height="10.54" fill="#585858"/>
<rect x="290.38" y="196.12" width="149.22" height="0.68" fill="#ffffff"/>
<rect x="438.92" y="185.58" width="0.68" height="11.22" fill="#ffffff"/>
<rect x="291.06" y="195.44" width="147.86" height="0.68" fill="#e3e3e3"/>
<rect x="438.24" y="186.26" width="0.68" height="9.86" fill="#e3e3e3"/>
<rect x="428.6" y="186.4" width="11" height="10.4" fill="#f0f0f0"/>
<rect x="428.6" y="186.4" width="10.22" height="0.78" fill="#ffffff"/>
<rect x="428.6" y="186.4" width="0.78" height="9.62" fill="#ffffff"/>
<rect x="429.38" y="195.24" width="9.44" height="0.78" fill="#a0a0a0"/>
<rect x="438.04" y="187.18" width="0.78" height="8.84" fill="#a0a0a0"/>
<rect x="428.6" y="196.02" width="11" height="0.78" fill="#5e5e5e"/>
<rect x="438.82" y="186.4" width="0.78" height="10.4" fill="#5e5e5e"/>
<path d="M431.4 189.95H436.6L434 192.75Z" fill="#000"/>
<text x="291.9" y="194.33" font-size="9.52" fill="#000" textLength="20.55" lengthAdjust="spacingAndGlyphs" stroke="#000" stroke-width="0.14">B450C</text>
<rect x="444.8" y="184" width="22.2" height="13.7" fill="#f0f0f0"/>
<rect x="444.8" y="184" width="21.52" height="0.68" fill="#ffffff"/>
<rect x="444.8" y="184" width="0.68" height="13.02" fill="#ffffff"/>
<rect x="445.48" y="196.34" width="20.84" height="0.68" fill="#a0a0a0"/>
<rect x="465.64" y="184.68" width="0.68" height="12.34" fill="#a0a0a0"/>
<rect x="444.8" y="197.02" width="22.2" height="0.68" fill="#696969"/>
<rect x="466.32" y="184" width="0.68" height="13.7" fill="#696969"/>
<text x="455.2" y="194.43" font-size="8.32" fill="#8a8a8a" textLength="5.6" lengthAdjust="spacingAndGlyphs" text-anchor="middle" stroke="#8a8a8a" stroke-width="0.07">...</text>
<rect x="226.08" y="206.48" width="240.6" height="44.2" fill="none" stroke="#ffffff" stroke-width="0.68"/>
<rect x="225.4" y="205.8" width="240.6" height="44.2" fill="none" stroke="#a0a0a0" stroke-width="0.68"/>
<rect x="231" y="201.8" width="67.2" height="8" fill="#f0f0f0"/>
<text x="232.5" y="209.28" font-size="8.32" fill="#000" textLength="64.2" lengthAdjust="spacingAndGlyphs" stroke="#000" stroke-width="0.07">Fast rebar positioning</text>
<text x="237.5" y="224.88" font-size="8.32" fill="#000" textLength="23.91" lengthAdjust="spacingAndGlyphs" stroke="#000" stroke-width="0.07">Position</text>
<rect x="275.3" y="215.8" width="48.5" height="12.2" fill="#ffffff"/>
<rect x="275.3" y="215.8" width="48.5" height="0.68" fill="#808080"/>
<rect x="275.3" y="215.8" width="0.68" height="12.2" fill="#808080"/>
<rect x="275.98" y="216.48" width="47.14" height="0.68" fill="#585858"/>
<rect x="275.98" y="216.48" width="0.68" height="10.84" fill="#585858"/>
<rect x="275.98" y="227.32" width="47.82" height="0.68" fill="#ffffff"/>
<rect x="323.12" y="216.48" width="0.68" height="11.52" fill="#ffffff"/>
<rect x="276.66" y="226.64" width="46.46" height="0.68" fill="#e3e3e3"/>
<rect x="322.44" y="217.16" width="0.68" height="10.16" fill="#e3e3e3"/>
<rect x="312.8" y="217.3" width="11" height="10.7" fill="#f0f0f0"/>
<rect x="312.8" y="217.3" width="10.22" height="0.78" fill="#ffffff"/>
<rect x="312.8" y="217.3" width="0.78" height="9.92" fill="#ffffff"/>
<rect x="313.58" y="226.44" width="9.44" height="0.78" fill="#a0a0a0"/>
<rect x="322.24" y="218.08" width="0.78" height="9.14" fill="#a0a0a0"/>
<rect x="312.8" y="227.22" width="11" height="0.78" fill="#5e5e5e"/>
<rect x="323.02" y="217.3" width="0.78" height="10.7" fill="#5e5e5e"/>
<path d="M315.6 221H320.8L318.2 223.8Z" fill="#000"/>
<text x="277.7" y="225.38" font-size="8.32" fill="#000" textLength="10.83" lengthAdjust="spacingAndGlyphs" stroke="#000" stroke-width="0.07">Top</text>
<text x="333.4" y="225.38" font-size="8.32" fill="#000" textLength="23.9" lengthAdjust="spacingAndGlyphs" stroke="#000" stroke-width="0.07">Number</text>
<rect x="363.3" y="216.4" width="40.6" height="11.4" fill="#ffffff"/>
<rect x="363.3" y="216.4" width="40.6" height="0.68" fill="#808080"/>
<rect x="363.3" y="216.4" width="0.68" height="11.4" fill="#808080"/>
<rect x="363.98" y="217.08" width="39.24" height="0.68" fill="#585858"/>
<rect x="363.98" y="217.08" width="0.68" height="10.04" fill="#585858"/>
<rect x="363.98" y="227.12" width="39.92" height="0.68" fill="#ffffff"/>
<rect x="403.22" y="217.08" width="0.68" height="10.72" fill="#ffffff"/>
<rect x="364.66" y="226.44" width="38.56" height="0.68" fill="#e3e3e3"/>
<rect x="402.54" y="217.76" width="0.68" height="9.36" fill="#e3e3e3"/>
<rect x="393.3" y="217.9" width="10.6" height="5.05" fill="#f0f0f0"/>
<rect x="393.3" y="217.9" width="9.82" height="0.78" fill="#ffffff"/>
<rect x="393.3" y="217.9" width="0.78" height="4.27" fill="#ffffff"/>
<rect x="394.08" y="221.39" width="9.04" height="0.78" fill="#a0a0a0"/>
<rect x="402.34" y="218.68" width="0.78" height="3.49" fill="#a0a0a0"/>
<rect x="393.3" y="222.17" width="10.6" height="0.78" fill="#5e5e5e"/>
<rect x="403.12" y="217.9" width="0.78" height="5.05" fill="#5e5e5e"/>
<rect x="393.3" y="222.95" width="10.6" height="4.85" fill="#f0f0f0"/>
<rect x="393.3" y="222.95" width="9.82" height="0.78" fill="#ffffff"/>
<rect x="393.3" y="222.95" width="0.78" height="4.07" fill="#ffffff"/>
<rect x="394.08" y="226.24" width="9.04" height="0.78" fill="#a0a0a0"/>
<rect x="402.34" y="223.73" width="0.78" height="3.29" fill="#a0a0a0"/>
<rect x="393.3" y="227.02" width="10.6" height="0.78" fill="#5e5e5e"/>
<rect x="403.12" y="222.95" width="0.78" height="4.85" fill="#5e5e5e"/>
<path d="M397.45 221.32H400.15L398.8 219.72Z" fill="#000"/>
<path d="M397.45 224.27H400.15L398.8 225.87Z" fill="#000"/>
<text x="378.98" y="225.58" font-size="9.52" fill="#000" textLength="3.87" lengthAdjust="spacingAndGlyphs" text-anchor="middle" stroke="#000" stroke-width="0.14">2</text>
<text x="237.5" y="242.18" font-size="8.32" fill="#000" textLength="28.76" lengthAdjust="spacingAndGlyphs" stroke="#000" stroke-width="0.07">Bar cover</text>
<rect x="275.3" y="233.6" width="52.3" height="11.5" fill="#ffffff"/>
<rect x="275.3" y="233.6" width="52.3" height="0.68" fill="#808080"/>
<rect x="275.3" y="233.6" width="0.68" height="11.5" fill="#808080"/>
<rect x="275.98" y="234.28" width="50.94" height="0.68" fill="#585858"/>
<rect x="275.98" y="234.28" width="0.68" height="10.14" fill="#585858"/>
<rect x="275.98" y="244.42" width="51.62" height="0.68" fill="#ffffff"/>
<rect x="326.92" y="234.28" width="0.68" height="10.82" fill="#ffffff"/>
<rect x="276.66" y="243.74" width="50.26" height="0.68" fill="#e3e3e3"/>
<rect x="326.24" y="234.96" width="0.68" height="9.46" fill="#e3e3e3"/>
<rect x="317" y="235.1" width="10.6" height="5.1" fill="#f0f0f0"/>
<rect x="317" y="235.1" width="9.82" height="0.78" fill="#ffffff"/>
<rect x="317" y="235.1" width="0.78" height="4.32" fill="#ffffff"/>
<rect x="317.78" y="238.64" width="9.04" height="0.78" fill="#a0a0a0"/>
<rect x="326.04" y="235.88" width="0.78" height="3.54" fill="#a0a0a0"/>
<rect x="317" y="239.42" width="10.6" height="0.78" fill="#5e5e5e"/>
<rect x="326.82" y="235.1" width="0.78" height="5.1" fill="#5e5e5e"/>
<rect x="317" y="240.2" width="10.6" height="4.9" fill="#f0f0f0"/>
<rect x="317" y="240.2" width="9.82" height="0.78" fill="#ffffff"/>
<rect x="317" y="240.2" width="0.78" height="4.12" fill="#ffffff"/>
<rect x="317.78" y="243.54" width="9.04" height="0.78" fill="#a0a0a0"/>
<rect x="326.04" y="240.98" width="0.78" height="3.34" fill="#a0a0a0"/>
<rect x="317" y="244.32" width="10.6" height="0.78" fill="#5e5e5e"/>
<rect x="326.82" y="240.2" width="0.78" height="4.9" fill="#5e5e5e"/>
<path d="M321.15 238.55H323.85L322.5 236.95Z" fill="#000"/>
<path d="M321.15 241.55H323.85L322.5 243.15Z" fill="#000"/>
<text x="296.83" y="242.83" font-size="9.52" fill="#000" textLength="25.16" lengthAdjust="spacingAndGlyphs" text-anchor="middle" stroke="#000" stroke-width="0.14">0.00000</text>
<rect x="363.3" y="231.5" width="42.3" height="14.2" fill="#f0f0f0"/>
<rect x="363.3" y="231.5" width="41.62" height="0.68" fill="#ffffff"/>
<rect x="363.3" y="231.5" width="0.68" height="13.52" fill="#ffffff"/>
<rect x="363.98" y="244.34" width="40.94" height="0.68" fill="#a0a0a0"/>
<rect x="404.24" y="232.18" width="0.68" height="12.84" fill="#a0a0a0"/>
<rect x="363.3" y="245.02" width="42.3" height="0.68" fill="#696969"/>
<rect x="404.92" y="231.5" width="0.68" height="14.2" fill="#696969"/>
<text x="383.75" y="242.18" font-size="8.32" fill="#000" textLength="11.96" lengthAdjust="spacingAndGlyphs" text-anchor="middle" stroke="#000" stroke-width="0.07">Add</text>
<rect x="226.08" y="260.48" width="240.6" height="52.8" fill="none" stroke="#ffffff" stroke-width="0.68"/>
<rect x="225.4" y="259.8" width="240.6" height="52.8" fill="none" stroke="#a0a0a0" stroke-width="0.68"/>
<rect x="231" y="255.8" width="63.8" height="8" fill="#f0f0f0"/>
<text x="232.5" y="263.28" font-size="8.32" fill="#000" textLength="60.8" lengthAdjust="spacingAndGlyphs" stroke="#000" stroke-width="0.07">Shear reinforcement</text>
<text x="231.3" y="274.98" font-size="8.32" fill="#000" textLength="47" lengthAdjust="spacingAndGlyphs" stroke="#000" stroke-width="0.07">Stirrup diameter</text>
<text x="293.7" y="275.58" font-size="8.32" fill="#000" textLength="35.11" lengthAdjust="spacingAndGlyphs" stroke="#000" stroke-width="0.07">Stirrup area</text>
<text x="356.2" y="275.18" font-size="8.32" fill="#000" textLength="33.99" lengthAdjust="spacingAndGlyphs" stroke="#000" stroke-width="0.07">Stirrup legs</text>
<text x="399.8" y="275.18" font-size="8.32" fill="#000" textLength="24.28" lengthAdjust="spacingAndGlyphs" stroke="#000" stroke-width="0.07">Spacing</text>
<rect x="238" y="276.7" width="31.8" height="12.1" fill="#ffffff"/>
<rect x="238" y="276.7" width="31.8" height="0.68" fill="#808080"/>
<rect x="238" y="276.7" width="0.68" height="12.1" fill="#808080"/>
<rect x="238.68" y="277.38" width="30.44" height="0.68" fill="#585858"/>
<rect x="238.68" y="277.38" width="0.68" height="10.74" fill="#585858"/>
<rect x="238.68" y="288.12" width="31.12" height="0.68" fill="#ffffff"/>
<rect x="269.12" y="277.38" width="0.68" height="11.42" fill="#ffffff"/>
<rect x="239.36" y="287.44" width="29.76" height="0.68" fill="#e3e3e3"/>
<rect x="268.44" y="278.06" width="0.68" height="10.06" fill="#e3e3e3"/>
<rect x="258.8" y="278.2" width="11" height="10.6" fill="#f0f0f0"/>
<rect x="258.8" y="278.2" width="10.22" height="0.78" fill="#ffffff"/>
<rect x="258.8" y="278.2" width="0.78" height="9.82" fill="#ffffff"/>
<rect x="259.58" y="287.24" width="9.44" height="0.78" fill="#a0a0a0"/>
<rect x="268.24" y="278.98" width="0.78" height="9.04" fill="#a0a0a0"/>
<rect x="258.8" y="288.02" width="11" height="0.78" fill="#5e5e5e"/>
<rect x="269.02" y="278.2" width="0.78" height="10.6" fill="#5e5e5e"/>
<path d="M261.6 281.85H266.8L264.2 284.65Z" fill="#000"/>
<text x="240" y="286.23" font-size="9.52" fill="#000" textLength="3.74" lengthAdjust="spacingAndGlyphs" stroke="#000" stroke-width="0.14">8</text>
<text x="276.7" y="286.58" font-size="8.32" fill="#000" textLength="11.2" lengthAdjust="spacingAndGlyphs" stroke="#000" stroke-width="0.07">mm</text>
<rect x="301.2" y="278" width="49.8" height="11.3" fill="#ffffff"/>
<rect x="301.2" y="278" width="49.8" height="0.68" fill="#808080"/>
<rect x="301.2" y="278" width="0.68" height="11.3" fill="#808080"/>
<rect x="301.88" y="278.68" width="48.44" height="0.68" fill="#585858"/>
<rect x="301.88" y="278.68" width="0.68" height="9.94" fill="#585858"/>
<rect x="301.88" y="288.62" width="49.12" height="0.68" fill="#ffffff"/>
<rect x="350.32" y="278.68" width="0.68" height="10.62" fill="#ffffff"/>
<rect x="302.56" y="287.94" width="47.76" height="0.68" fill="#e3e3e3"/>
<rect x="349.64" y="279.36" width="0.68" height="9.26" fill="#e3e3e3"/>
<rect x="340.4" y="279.5" width="10.6" height="5" fill="#f0f0f0"/>
<rect x="340.4" y="279.5" width="9.82" height="0.78" fill="#ffffff"/>
<rect x="340.4" y="279.5" width="0.78" height="4.22" fill="#ffffff"/>
<rect x="341.18" y="282.94" width="9.04" height="0.78" fill="#a0a0a0"/>
<rect x="349.44" y="280.28" width="0.78" height="3.44" fill="#a0a0a0"/>
<rect x="340.4" y="283.72" width="10.6" height="0.78" fill="#5e5e5e"/>
<rect x="350.22" y="279.5" width="0.78" height="5" fill="#5e5e5e"/>
<rect x="340.4" y="284.5" width="10.6" height="4.8" fill="#f0f0f0"/>
<rect x="340.4" y="284.5" width="9.82" height="0.78" fill="#ffffff"/>
<rect x="340.4" y="284.5" width="0.78" height="4.02" fill="#ffffff"/>
<rect x="341.18" y="287.74" width="9.04" height="0.78" fill="#a0a0a0"/>
<rect x="349.44" y="285.28" width="0.78" height="3.24" fill="#a0a0a0"/>
<rect x="340.4" y="288.52" width="10.6" height="0.78" fill="#5e5e5e"/>
<rect x="350.22" y="284.5" width="0.78" height="4.8" fill="#5e5e5e"/>
<path d="M344.55 282.9H347.25L345.9 281.3Z" fill="#000"/>
<path d="M344.55 285.8H347.25L345.9 287.4Z" fill="#000"/>
<text x="321.48" y="287.13" font-size="9.52" fill="#000" textLength="29.03" lengthAdjust="spacingAndGlyphs" text-anchor="middle" stroke="#000" stroke-width="0.14">0.000050</text>
<rect x="363.3" y="277.4" width="27.6" height="11.5" fill="#ffffff"/>
<rect x="363.3" y="277.4" width="27.6" height="0.68" fill="#808080"/>
<rect x="363.3" y="277.4" width="0.68" height="11.5" fill="#808080"/>
<rect x="363.98" y="278.08" width="26.24" height="0.68" fill="#585858"/>
<rect x="363.98" y="278.08" width="0.68" height="10.14" fill="#585858"/>
<rect x="363.98" y="288.22" width="26.92" height="0.68" fill="#ffffff"/>
<rect x="390.22" y="278.08" width="0.68" height="10.82" fill="#ffffff"/>
<rect x="364.66" y="287.54" width="25.56" height="0.68" fill="#e3e3e3"/>
<rect x="389.54" y="278.76" width="0.68" height="9.46" fill="#e3e3e3"/>
<rect x="380.3" y="278.9" width="10.6" height="5.1" fill="#f0f0f0"/>
<rect x="380.3" y="278.9" width="9.82" height="0.78" fill="#ffffff"/>
<rect x="380.3" y="278.9" width="0.78" height="4.32" fill="#ffffff"/>
<rect x="381.08" y="282.44" width="9.04" height="0.78" fill="#a0a0a0"/>
<rect x="389.34" y="279.68" width="0.78" height="3.54" fill="#a0a0a0"/>
<rect x="380.3" y="283.22" width="10.6" height="0.78" fill="#5e5e5e"/>
<rect x="390.12" y="278.9" width="0.78" height="5.1" fill="#5e5e5e"/>
<rect x="380.3" y="284" width="10.6" height="4.9" fill="#f0f0f0"/>
<rect x="380.3" y="284" width="9.82" height="0.78" fill="#ffffff"/>
<rect x="380.3" y="284" width="0.78" height="4.12" fill="#ffffff"/>
<rect x="381.08" y="287.34" width="9.04" height="0.78" fill="#a0a0a0"/>
<rect x="389.34" y="284.78" width="0.78" height="3.34" fill="#a0a0a0"/>
<rect x="380.3" y="288.12" width="10.6" height="0.78" fill="#5e5e5e"/>
<rect x="390.12" y="284" width="0.78" height="4.9" fill="#5e5e5e"/>
<path d="M384.45 282.35H387.15L385.8 280.75Z" fill="#000"/>
<path d="M384.45 285.35H387.15L385.8 286.95Z" fill="#000"/>
<text x="372.48" y="286.63" font-size="9.52" fill="#000" textLength="3.87" lengthAdjust="spacingAndGlyphs" text-anchor="middle" stroke="#000" stroke-width="0.14">2</text>
<rect x="407.4" y="277.4" width="54.3" height="11.5" fill="#ffffff"/>
<rect x="407.4" y="277.4" width="54.3" height="0.68" fill="#808080"/>
<rect x="407.4" y="277.4" width="0.68" height="11.5" fill="#808080"/>
<rect x="408.08" y="278.08" width="52.94" height="0.68" fill="#585858"/>
<rect x="408.08" y="278.08" width="0.68" height="10.14" fill="#585858"/>
<rect x="408.08" y="288.22" width="53.62" height="0.68" fill="#ffffff"/>
<rect x="461.02" y="278.08" width="0.68" height="10.82" fill="#ffffff"/>
<rect x="408.76" y="287.54" width="52.26" height="0.68" fill="#e3e3e3"/>
<rect x="460.34" y="278.76" width="0.68" height="9.46" fill="#e3e3e3"/>
<rect x="451.1" y="278.9" width="10.6" height="5.1" fill="#f0f0f0"/>
<rect x="451.1" y="278.9" width="9.82" height="0.78" fill="#ffffff"/>
<rect x="451.1" y="278.9" width="0.78" height="4.32" fill="#ffffff"/>
<rect x="451.88" y="282.44" width="9.04" height="0.78" fill="#a0a0a0"/>
<rect x="460.14" y="279.68" width="0.78" height="3.54" fill="#a0a0a0"/>
<rect x="451.1" y="283.22" width="10.6" height="0.78" fill="#5e5e5e"/>
<rect x="460.92" y="278.9" width="0.78" height="5.1" fill="#5e5e5e"/>
<rect x="451.1" y="284" width="10.6" height="4.9" fill="#f0f0f0"/>
<rect x="451.1" y="284" width="9.82" height="0.78" fill="#ffffff"/>
<rect x="451.1" y="284" width="0.78" height="4.12" fill="#ffffff"/>
<rect x="451.88" y="287.34" width="9.04" height="0.78" fill="#a0a0a0"/>
<rect x="460.14" y="284.78" width="0.78" height="3.34" fill="#a0a0a0"/>
<rect x="451.1" y="288.12" width="10.6" height="0.78" fill="#5e5e5e"/>
<rect x="460.92" y="284" width="0.78" height="4.9" fill="#5e5e5e"/>
<path d="M455.25 282.35H457.95L456.6 280.75Z" fill="#000"/>
<path d="M455.25 285.35H457.95L456.6 286.95Z" fill="#000"/>
<text x="429.93" y="286.63" font-size="9.52" fill="#000" textLength="17.42" lengthAdjust="spacingAndGlyphs" text-anchor="middle" stroke="#000" stroke-width="0.14">0.150</text>
<text x="239.7" y="304.98" font-size="8.32" fill="#000" textLength="45.56" lengthAdjust="spacingAndGlyphs" stroke="#000" stroke-width="0.07">Stirrup material</text>
<rect x="299.2" y="295.4" width="136.4" height="12.1" fill="#ffffff"/>
<rect x="299.2" y="295.4" width="136.4" height="0.68" fill="#808080"/>
<rect x="299.2" y="295.4" width="0.68" height="12.1" fill="#808080"/>
<rect x="299.88" y="296.08" width="135.04" height="0.68" fill="#585858"/>
<rect x="299.88" y="296.08" width="0.68" height="10.74" fill="#585858"/>
<rect x="299.88" y="306.82" width="135.72" height="0.68" fill="#ffffff"/>
<rect x="434.92" y="296.08" width="0.68" height="11.42" fill="#ffffff"/>
<rect x="300.56" y="306.14" width="134.36" height="0.68" fill="#e3e3e3"/>
<rect x="434.24" y="296.76" width="0.68" height="10.06" fill="#e3e3e3"/>
<rect x="424.6" y="296.9" width="11" height="10.6" fill="#f0f0f0"/>
<rect x="424.6" y="296.9" width="10.22" height="0.78" fill="#ffffff"/>
<rect x="424.6" y="296.9" width="0.78" height="9.82" fill="#ffffff"/>
<rect x="425.38" y="305.94" width="9.44" height="0.78" fill="#a0a0a0"/>
<rect x="434.04" y="297.68" width="0.78" height="9.04" fill="#a0a0a0"/>
<rect x="424.6" y="306.72" width="11" height="0.78" fill="#5e5e5e"/>
<rect x="434.82" y="296.9" width="0.78" height="10.6" fill="#5e5e5e"/>
<path d="M427.4 300.55H432.6L430 303.35Z" fill="#000"/>
<text x="301.4" y="304.93" font-size="9.52" fill="#000" textLength="20.55" lengthAdjust="spacingAndGlyphs" stroke="#000" stroke-width="0.14">B450C</text>
<rect x="441.2" y="294" width="21.4" height="13.4" fill="#f0f0f0"/>
<rect x="441.2" y="294" width="20.72" height="0.68" fill="#ffffff"/>
<rect x="441.2" y="294" width="0.68" height="12.72" fill="#ffffff"/>
<rect x="441.88" y="306.04" width="20.04" height="0.68" fill="#a0a0a0"/>
<rect x="461.24" y="294.68" width="0.68" height="12.04" fill="#a0a0a0"/>
<rect x="441.2" y="306.72" width="21.4" height="0.68" fill="#696969"/>
<rect x="461.92" y="294" width="0.68" height="13.4" fill="#696969"/>
<text x="451.2" y="304.28" font-size="8.32" fill="#8a8a8a" textLength="5.6" lengthAdjust="spacingAndGlyphs" text-anchor="middle" stroke="#8a8a8a" stroke-width="0.07">...</text>
</g>
<g id="secchart">
<rect x="475.2" y="22.3" width="292.3" height="292.3" fill="#ffffff"/>
<rect x="475.2" y="22.3" width="292.3" height="1.15" fill="#626262"/>
<rect x="475.2" y="22.3" width="1" height="292.3" fill="#626262"/>
<rect x="475.2" y="313.45" width="292.3" height="1.15" fill="#606060"/>
<rect x="515.9" y="46.75" width="135.6" height="226" fill="#808080" stroke="#4a4a4a" stroke-width="0.8"/>
<circle cx="529.46" cy="60.31" r="3.7" fill="#ffff00" stroke="#222" stroke-width="0.7"/>
<circle cx="583.7" cy="60.31" r="4" fill="#000"/>
<circle cx="637.94" cy="60.31" r="4" fill="#000"/>
<circle cx="529.46" cy="259.19" r="4" fill="#000"/>
<circle cx="583.7" cy="259.19" r="4" fill="#000"/>
<circle cx="637.94" cy="259.19" r="4" fill="#000"/>
<rect x="504.7" y="29.4" width="248.9" height="260.2" fill="none" stroke="#3c3c3c" stroke-width="0.8"/>
<path d="M506.86 29.4v1.5M506.86 288V291.2M503.3 281.79H506.1M753.6 281.79h-2.3M515.9 29.4v3.4M515.9 286.6V293M500.9 272.75H508.1M753.6 272.75h-3.8M524.94 29.4v1.5M524.94 288V291.2M503.3 263.71H506.1M753.6 263.71h-2.3M533.98 29.4v1.5M533.98 288V291.2M503.3 254.67H506.1M753.6 254.67h-2.3M543.02 29.4v1.5M543.02 288V291.2M503.3 245.63H506.1M753.6 245.63h-2.3M552.06 29.4v1.5M552.06 288V291.2M503.3 236.59H506.1M753.6 236.59h-2.3M561.1 29.4v3.4M561.1 286.6V293M500.9 227.55H508.1M753.6 227.55h-3.8M570.14 29.4v1.5M570.14 288V291.2M503.3 218.51H506.1M753.6 218.51h-2.3M579.18 29.4v1.5M579.18 288V291.2M503.3 209.47H506.1M753.6 209.47h-2.3M588.22 29.4v1.5M588.22 288V291.2M503.3 200.43H506.1M753.6 200.43h-2.3M597.26 29.4v1.5M597.26 288V291.2M503.3 191.39H506.1M753.6 191.39h-2.3M606.3 29.4v3.4M606.3 286.6V293M500.9 182.35H508.1M753.6 182.35h-3.8M615.34 29.4v1.5M615.34 288V291.2M503.3 173.31H506.1M753.6 173.31h-2.3M624.38 29.4v1.5M624.38 288V291.2M503.3 164.27H506.1M753.6 164.27h-2.3M633.42 29.4v1.5M633.42 288V291.2M503.3 155.23H506.1M753.6 155.23h-2.3M642.46 29.4v1.5M642.46 288V291.2M503.3 146.19H506.1M753.6 146.19h-2.3M651.5 29.4v3.4M651.5 286.6V293M500.9 137.15H508.1M753.6 137.15h-3.8M660.54 29.4v1.5M660.54 288V291.2M503.3 128.11H506.1M753.6 128.11h-2.3M669.58 29.4v1.5M669.58 288V291.2M503.3 119.07H506.1M753.6 119.07h-2.3M678.62 29.4v1.5M678.62 288V291.2M503.3 110.03H506.1M753.6 110.03h-2.3M687.66 29.4v1.5M687.66 288V291.2M503.3 100.99H506.1M753.6 100.99h-2.3M696.7 29.4v3.4M696.7 286.6V293M500.9 91.95H508.1M753.6 91.95h-3.8M705.74 29.4v1.5M705.74 288V291.2M503.3 82.91H506.1M753.6 82.91h-2.3M714.78 29.4v1.5M714.78 288V291.2M503.3 73.87H506.1M753.6 73.87h-2.3M723.82 29.4v1.5M723.82 288V291.2M503.3 64.83H506.1M753.6 64.83h-2.3M732.86 29.4v1.5M732.86 288V291.2M503.3 55.79H506.1M753.6 55.79h-2.3M741.9 29.4v3.4M741.9 286.6V293M500.9 46.75H508.1M753.6 46.75h-3.8M750.94 29.4v1.5M750.94 288V291.2M503.3 37.71H506.1M753.6 37.71h-2.3" stroke="#262626" stroke-width="0.95" fill="none"/>
<text x="496.2" y="275.66" font-size="10.3" fill="#2a2a2a" textLength="12.9" lengthAdjust="spacingAndGlyphs" text-anchor="end" stroke="#2a2a2a" stroke-width="0.14" style="font-family:'Liberation Serif',serif">0.0</text>
<text x="515.4" y="304.91" font-size="10.3" fill="#2a2a2a" textLength="12.9" lengthAdjust="spacingAndGlyphs" text-anchor="middle" stroke="#2a2a2a" stroke-width="0.14" style="font-family:'Liberation Serif',serif">0.0</text>
<text x="496.2" y="230.46" font-size="10.3" fill="#2a2a2a" textLength="12.9" lengthAdjust="spacingAndGlyphs" text-anchor="end" stroke="#2a2a2a" stroke-width="0.14" style="font-family:'Liberation Serif',serif">0.1</text>
<text x="560.6" y="304.91" font-size="10.3" fill="#2a2a2a" textLength="12.9" lengthAdjust="spacingAndGlyphs" text-anchor="middle" stroke="#2a2a2a" stroke-width="0.14" style="font-family:'Liberation Serif',serif">0.1</text>
<text x="496.2" y="185.26" font-size="10.3" fill="#2a2a2a" textLength="12.9" lengthAdjust="spacingAndGlyphs" text-anchor="end" stroke="#2a2a2a" stroke-width="0.14" style="font-family:'Liberation Serif',serif">0.2</text>
<text x="605.8" y="304.91" font-size="10.3" fill="#2a2a2a" textLength="12.9" lengthAdjust="spacingAndGlyphs" text-anchor="middle" stroke="#2a2a2a" stroke-width="0.14" style="font-family:'Liberation Serif',serif">0.2</text>
<text x="496.2" y="140.06" font-size="10.3" fill="#2a2a2a" textLength="12.9" lengthAdjust="spacingAndGlyphs" text-anchor="end" stroke="#2a2a2a" stroke-width="0.14" style="font-family:'Liberation Serif',serif">0.3</text>
<text x="651" y="304.91" font-size="10.3" fill="#2a2a2a" textLength="12.9" lengthAdjust="spacingAndGlyphs" text-anchor="middle" stroke="#2a2a2a" stroke-width="0.14" style="font-family:'Liberation Serif',serif">0.3</text>
<text x="496.2" y="94.86" font-size="10.3" fill="#2a2a2a" textLength="12.9" lengthAdjust="spacingAndGlyphs" text-anchor="end" stroke="#2a2a2a" stroke-width="0.14" style="font-family:'Liberation Serif',serif">0.4</text>
<text x="696.2" y="304.91" font-size="10.3" fill="#2a2a2a" textLength="12.9" lengthAdjust="spacingAndGlyphs" text-anchor="middle" stroke="#2a2a2a" stroke-width="0.14" style="font-family:'Liberation Serif',serif">0.4</text>
<text x="496.2" y="49.66" font-size="10.3" fill="#2a2a2a" textLength="12.9" lengthAdjust="spacingAndGlyphs" text-anchor="end" stroke="#2a2a2a" stroke-width="0.14" style="font-family:'Liberation Serif',serif">0.5</text>
<text x="741.4" y="304.91" font-size="10.3" fill="#2a2a2a" textLength="12.9" lengthAdjust="spacingAndGlyphs" text-anchor="middle" stroke="#2a2a2a" stroke-width="0.14" style="font-family:'Liberation Serif',serif">0.5</text>
</g>
<g id="span">
<rect x="3.28" y="322.48" width="703.8" height="108.5" fill="none" stroke="#ffffff" stroke-width="0.68"/>
<rect x="2.6" y="321.8" width="703.8" height="108.5" fill="none" stroke="#a0a0a0" stroke-width="0.68"/>
<rect x="7.9" y="317.8" width="44.6" height="8" fill="#f0f0f0"/>
<text x="9.4" y="325.28" font-size="8.32" fill="#000" textLength="41.6" lengthAdjust="spacingAndGlyphs" stroke="#000" stroke-width="0.07">Span drawing</text>
<rect x="6" y="330.6" width="694" height="96.4" fill="#ffffff"/>
<rect x="6" y="330.6" width="694" height="0.9" fill="#6e6e6e"/>
<rect x="6" y="330.6" width="0.9" height="96.4" fill="#6e6e6e"/>
<rect x="6" y="426.1" width="694" height="0.9" fill="#707070"/>
<rect x="699.1" y="330.6" width="0.9" height="96.4" fill="#707070"/>
<rect x="61" y="343.4" width="613.5" height="56" fill="#808080" stroke="#555" stroke-width="0.9"/>
<rect x="61" y="344.9" width="613.5" height="3.2" fill="#000"/>
<rect x="61" y="394" width="613.5" height="3.2" fill="#000"/>
<rect x="60.1" y="344.9" width="124.5" height="3.2" fill="#008000"/>
<rect x="60.1" y="394" width="124.5" height="3.2" fill="#008000"/>
<rect x="60.1" y="346.5" width="1.8" height="49.1" fill="#008000"/>
<rect x="90.77" y="346.5" width="1.8" height="49.1" fill="#008000"/>
<rect x="121.45" y="346.5" width="1.8" height="49.1" fill="#008000"/>
<rect x="152.12" y="346.5" width="1.8" height="49.1" fill="#008000"/>
<rect x="182.8" y="346.5" width="1.8" height="49.1" fill="#008000"/>
<rect x="244.15" y="347.5" width="1.8" height="47.1" fill="#0000ff"/>
<rect x="305.5" y="347.5" width="1.8" height="47.1" fill="#0000ff"/>
<rect x="366.85" y="347.5" width="1.8" height="47.1" fill="#0000ff"/>
<rect x="428.2" y="347.5" width="1.8" height="47.1" fill="#0000ff"/>
<rect x="489.55" y="347.5" width="1.8" height="47.1" fill="#0000ff"/>
<rect x="550.9" y="347.5" width="1.8" height="47.1" fill="#0000ff"/>
<rect x="581.57" y="347.5" width="1.8" height="47.1" fill="#0000ff"/>
<rect x="612.25" y="347.5" width="1.8" height="47.1" fill="#0000ff"/>
<rect x="642.93" y="347.5" width="1.8" height="47.1" fill="#0000ff"/>
<rect x="673.6" y="347.5" width="1.8" height="47.1" fill="#0000ff"/>
<rect x="551.45" y="337.5" width="0.7" height="70.3" fill="#111"/>
<rect x="674.15" y="337.5" width="0.7" height="70.3" fill="#111"/>
<rect x="550.9" y="347.5" width="1.8" height="47.1" fill="#0000c8"/>
<rect x="551.05" y="348.1" width="0.65" height="45.9" fill="#05053a"/>
<rect x="673.6" y="347.5" width="1.8" height="47.1" fill="#0000c8"/>
<rect x="673.75" y="348.1" width="0.65" height="45.9" fill="#05053a"/>
<rect x="60.6" y="337.5" width="0.8" height="67.5" fill="#0a8a0a"/>
<rect x="183.3" y="337.5" width="0.8" height="67.5" fill="#0a8a0a"/>
<rect x="48.4" y="337.5" width="638.2" height="67.5" fill="none" stroke="#4a4a4a" stroke-width="0.75"/>
<path d="M61 337.5v2.8M61 402.2V408M81.45 337.5v1.8M81.45 403.4V406.9M101.9 337.5v1.8M101.9 403.4V406.9M122.35 337.5v1.8M122.35 403.4V406.9M142.8 337.5v1.8M142.8 403.4V406.9M163.25 337.5v2.8M163.25 402.2V408M183.7 337.5v1.8M183.7 403.4V406.9M204.15 337.5v1.8M204.15 403.4V406.9M224.6 337.5v1.8M224.6 403.4V406.9M245.05 337.5v1.8M245.05 403.4V406.9M265.5 337.5v2.8M265.5 402.2V408M285.95 337.5v1.8M285.95 403.4V406.9M306.4 337.5v1.8M306.4 403.4V406.9M326.85 337.5v1.8M326.85 403.4V406.9M347.3 337.5v1.8M347.3 403.4V406.9M367.75 337.5v2.8M367.75 402.2V408M388.2 337.5v1.8M388.2 403.4V406.9M408.65 337.5v1.8M408.65 403.4V406.9M429.1 337.5v1.8M429.1 403.4V406.9M449.55 337.5v1.8M449.55 403.4V406.9M470 337.5v2.8M470 402.2V408M490.45 337.5v1.8M490.45 403.4V406.9M510.9 337.5v1.8M510.9 403.4V406.9M531.35 337.5v1.8M531.35 403.4V406.9M551.8 337.5v1.8M551.8 403.4V406.9M572.25 337.5v2.8M572.25 402.2V408M592.7 337.5v1.8M592.7 403.4V406.9M613.15 337.5v1.8M613.15 403.4V406.9M633.6 337.5v1.8M633.6 403.4V406.9M654.05 337.5v1.8M654.05 403.4V406.9M674.5 337.5v2.8M674.5 402.2V408M45 404.81H51.8M686.6 404.81h-3M46.7 402.57H50.1M686.6 402.57h-1.7M46.7 400.32H50.1M686.6 400.32h-1.7M46.7 398.08H50.1M686.6 398.08h-1.7M46.7 395.83H50.1M686.6 395.83h-1.7M45 393.59H51.8M686.6 393.59h-3M46.7 391.35H50.1M686.6 391.35h-1.7M46.7 389.1H50.1M686.6 389.1h-1.7M46.7 386.86H50.1M686.6 386.86h-1.7M46.7 384.61H50.1M686.6 384.61h-1.7M45 382.37H51.8M686.6 382.37h-3M46.7 380.13H50.1M686.6 380.13h-1.7M46.7 377.88H50.1M686.6 377.88h-1.7M46.7 375.64H50.1M686.6 375.64h-1.7M46.7 373.39H50.1M686.6 373.39h-1.7M45 371.15H51.8M686.6 371.15h-3M46.7 368.91H50.1M686.6 368.91h-1.7M46.7 366.66H50.1M686.6 366.66h-1.7M46.7 364.42H50.1M686.6 364.42h-1.7M46.7 362.17H50.1M686.6 362.17h-1.7M45 359.93H51.8M686.6 359.93h-3M46.7 357.69H50.1M686.6 357.69h-1.7M46.7 355.44H50.1M686.6 355.44h-1.7M46.7 353.2H50.1M686.6 353.2h-1.7M46.7 350.95H50.1M686.6 350.95h-1.7M45 348.71H51.8M686.6 348.71h-3M46.7 346.47H50.1M686.6 346.47h-1.7M46.7 344.22H50.1M686.6 344.22h-1.7M46.7 341.98H50.1M686.6 341.98h-1.7M46.7 339.73H50.1M686.6 339.73h-1.7M45 337.49H51.8M686.6 337.49h-3" stroke="#262626" stroke-width="0.75" fill="none"/>
<text x="33.7" y="407.49" font-size="8.6" fill="#2c2c2c" textLength="13.37" lengthAdjust="spacingAndGlyphs" text-anchor="middle" stroke="#2c2c2c" stroke-width="0.22">-0.3</text>
<text x="33.7" y="396.27" font-size="8.6" fill="#2c2c2c" textLength="13.37" lengthAdjust="spacingAndGlyphs" text-anchor="middle" stroke="#2c2c2c" stroke-width="0.22">-0.2</text>
<text x="33.7" y="385.05" font-size="8.6" fill="#2c2c2c" textLength="13.37" lengthAdjust="spacingAndGlyphs" text-anchor="middle" stroke="#2c2c2c" stroke-width="0.22">-0.1</text>
<text x="33.7" y="373.83" font-size="8.6" fill="#2c2c2c" textLength="10.79" lengthAdjust="spacingAndGlyphs" text-anchor="middle" stroke="#2c2c2c" stroke-width="0.22">0.0</text>
<text x="33.7" y="362.61" font-size="8.6" fill="#2c2c2c" textLength="10.79" lengthAdjust="spacingAndGlyphs" text-anchor="middle" stroke="#2c2c2c" stroke-width="0.22">0.1</text>
<text x="33.7" y="351.39" font-size="8.6" fill="#2c2c2c" textLength="10.79" lengthAdjust="spacingAndGlyphs" text-anchor="middle" stroke="#2c2c2c" stroke-width="0.22">0.2</text>
<text x="33.7" y="340.17" font-size="8.6" fill="#2c2c2c" textLength="10.79" lengthAdjust="spacingAndGlyphs" text-anchor="middle" stroke="#2c2c2c" stroke-width="0.22">0.3</text>
<text x="60.7" y="418.58" font-size="8.6" fill="#2c2c2c" textLength="10.79" lengthAdjust="spacingAndGlyphs" text-anchor="middle" stroke="#2c2c2c" stroke-width="0.22">0.0</text>
<text x="162.95" y="418.58" font-size="8.6" fill="#2c2c2c" textLength="10.79" lengthAdjust="spacingAndGlyphs" text-anchor="middle" stroke="#2c2c2c" stroke-width="0.22">0.5</text>
<text x="265.2" y="418.58" font-size="8.6" fill="#2c2c2c" textLength="10.79" lengthAdjust="spacingAndGlyphs" text-anchor="middle" stroke="#2c2c2c" stroke-width="0.22">1.0</text>
<text x="367.45" y="418.58" font-size="8.6" fill="#2c2c2c" textLength="10.79" lengthAdjust="spacingAndGlyphs" text-anchor="middle" stroke="#2c2c2c" stroke-width="0.22">1.5</text>
<text x="469.7" y="418.58" font-size="8.6" fill="#2c2c2c" textLength="10.79" lengthAdjust="spacingAndGlyphs" text-anchor="middle" stroke="#2c2c2c" stroke-width="0.22">2.0</text>
<text x="571.95" y="418.58" font-size="8.6" fill="#2c2c2c" textLength="10.79" lengthAdjust="spacingAndGlyphs" text-anchor="middle" stroke="#2c2c2c" stroke-width="0.22">2.5</text>
<text x="674.2" y="418.58" font-size="8.6" fill="#2c2c2c" textLength="10.79" lengthAdjust="spacingAndGlyphs" text-anchor="middle" stroke="#2c2c2c" stroke-width="0.22">3.0</text>
<text x="17.2" y="373.64" font-size="8" fill="#000" textLength="67.6" lengthAdjust="spacingAndGlyphs" text-anchor="middle" stroke="#000" stroke-width="0.15" font-weight="bold" transform="rotate(-90 17.2 370.6)">Section height [m]</text>
</g>
<rect x="715" y="331.2" width="44.6" height="20.5" fill="#f0f0f0"/>
<rect x="715" y="331.2" width="43.92" height="0.68" fill="#ffffff"/>
<rect x="715" y="331.2" width="0.68" height="19.82" fill="#ffffff"/>
<rect x="715.68" y="350.34" width="43.24" height="0.68" fill="#a0a0a0"/>
<rect x="758.24" y="331.88" width="0.68" height="19.14" fill="#a0a0a0"/>
<rect x="715" y="351.02" width="44.6" height="0.68" fill="#696969"/>
<rect x="758.92" y="331.2" width="0.68" height="20.5" fill="#696969"/>
<text x="736.6" y="345.03" font-size="8.32" fill="#000" textLength="34.73" lengthAdjust="spacingAndGlyphs" text-anchor="middle" stroke="#000" stroke-width="0.07">Export DXF</text>
<rect x="715" y="417.5" width="44.8" height="13.9" fill="#f0f0f0"/>
<rect x="715" y="417.5" width="44.12" height="0.68" fill="#ffffff"/>
<rect x="715" y="417.5" width="0.68" height="13.22" fill="#ffffff"/>
<rect x="715.68" y="430.04" width="43.44" height="0.68" fill="#a0a0a0"/>
<rect x="758.44" y="418.18" width="0.68" height="12.54" fill="#a0a0a0"/>
<rect x="715" y="430.72" width="44.8" height="0.68" fill="#696969"/>
<rect x="759.12" y="417.5" width="0.68" height="13.9" fill="#696969"/>
<text x="736.7" y="428.03" font-size="8.32" fill="#000" textLength="17.18" lengthAdjust="spacingAndGlyphs" text-anchor="middle" stroke="#000" stroke-width="0.07">Close</text>
</g>
<rect x="0" y="0" width="768" height="0.9" fill="#454545"/>
<rect x="766.7" y="0" width="1.3" height="435" fill="#424242"/>
<rect x="0" y="434" width="768" height="1" fill="#454545"/>
<rect x="0" y="0" width="0.75" height="435" fill="#5a5a5a"/>
</svg>
</body></html>
